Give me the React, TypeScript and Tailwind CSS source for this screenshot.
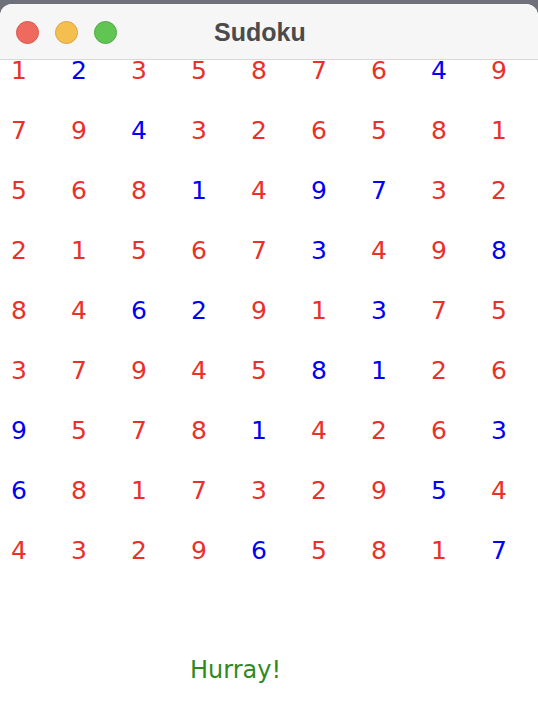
import React from "react";

const grid: [number, "r" | "b"][][] = [
  [[1, "r"], [2, "b"], [3, "r"], [5, "r"], [8, "r"], [7, "r"], [6, "r"], [4, "b"], [9, "r"]],
  [[7, "r"], [9, "r"], [4, "b"], [3, "r"], [2, "r"], [6, "r"], [5, "r"], [8, "r"], [1, "r"]],
  [[5, "r"], [6, "r"], [8, "r"], [1, "b"], [4, "r"], [9, "b"], [7, "b"], [3, "r"], [2, "r"]],
  [[2, "r"], [1, "r"], [5, "r"], [6, "r"], [7, "r"], [3, "b"], [4, "r"], [9, "r"], [8, "b"]],
  [[8, "r"], [4, "r"], [6, "b"], [2, "b"], [9, "r"], [1, "r"], [3, "b"], [7, "r"], [5, "r"]],
  [[3, "r"], [7, "r"], [9, "r"], [4, "r"], [5, "r"], [8, "b"], [1, "b"], [2, "r"], [6, "r"]],
  [[9, "b"], [5, "r"], [7, "r"], [8, "r"], [1, "b"], [4, "r"], [2, "r"], [6, "r"], [3, "b"]],
  [[6, "b"], [8, "r"], [1, "r"], [7, "r"], [3, "r"], [2, "r"], [9, "r"], [5, "b"], [4, "r"]],
  [[4, "r"], [3, "r"], [2, "r"], [9, "r"], [6, "b"], [5, "r"], [8, "r"], [1, "r"], [7, "b"]],
];

export default function App() {
  return (
    <div className="h-[712px] w-[538px] overflow-hidden bg-[#6e717a] pt-[4px]">
      <div className="flex h-[708px] w-[538px] flex-col overflow-hidden rounded-t-[12px] bg-white">
        <div className="relative flex h-[56px] shrink-0 items-center border-b border-[#d9d9d9] bg-[#f6f6f6]">
          <div className="flex items-center gap-[16px] pl-[16px] pt-[1px]">
            <span className="h-[23px] w-[23px] rounded-full border border-[#d9574c] bg-[#ee6a5f]" />
            <span className="h-[23px] w-[23px] rounded-full border border-[#d9a440] bg-[#f5bf4f]" />
            <span className="h-[23px] w-[23px] rounded-full border border-[#51a847] bg-[#61c554]" />
          </div>
          <div className="absolute left-[214px] top-[14px] text-[25px] font-bold leading-[28px] text-[#4b4b4b] [font-family:'Liberation_Sans',sans-serif]">
            Sudoku
          </div>
        </div>
        <div className="mt-[1px] grid grid-cols-[repeat(9,60px)] auto-rows-[60px] text-[25px] leading-[20px] [font-family:'DejaVu_Sans',sans-serif]">
          {grid.flat().map(([n, c], i) => (
            <div key={i} className={`pl-[11px] ${c === "r" ? "text-[#e8312a]" : "text-[#0000f5]"}`}>
              {n}
            </div>
          ))}
        </div>
        <div className="pl-[190px] pt-[59px] text-[24px] leading-[20px] text-[#2e8a1f] [font-family:'DejaVu_Sans',sans-serif]">
          Hurray!
        </div>
      </div>
    </div>
  );
}
